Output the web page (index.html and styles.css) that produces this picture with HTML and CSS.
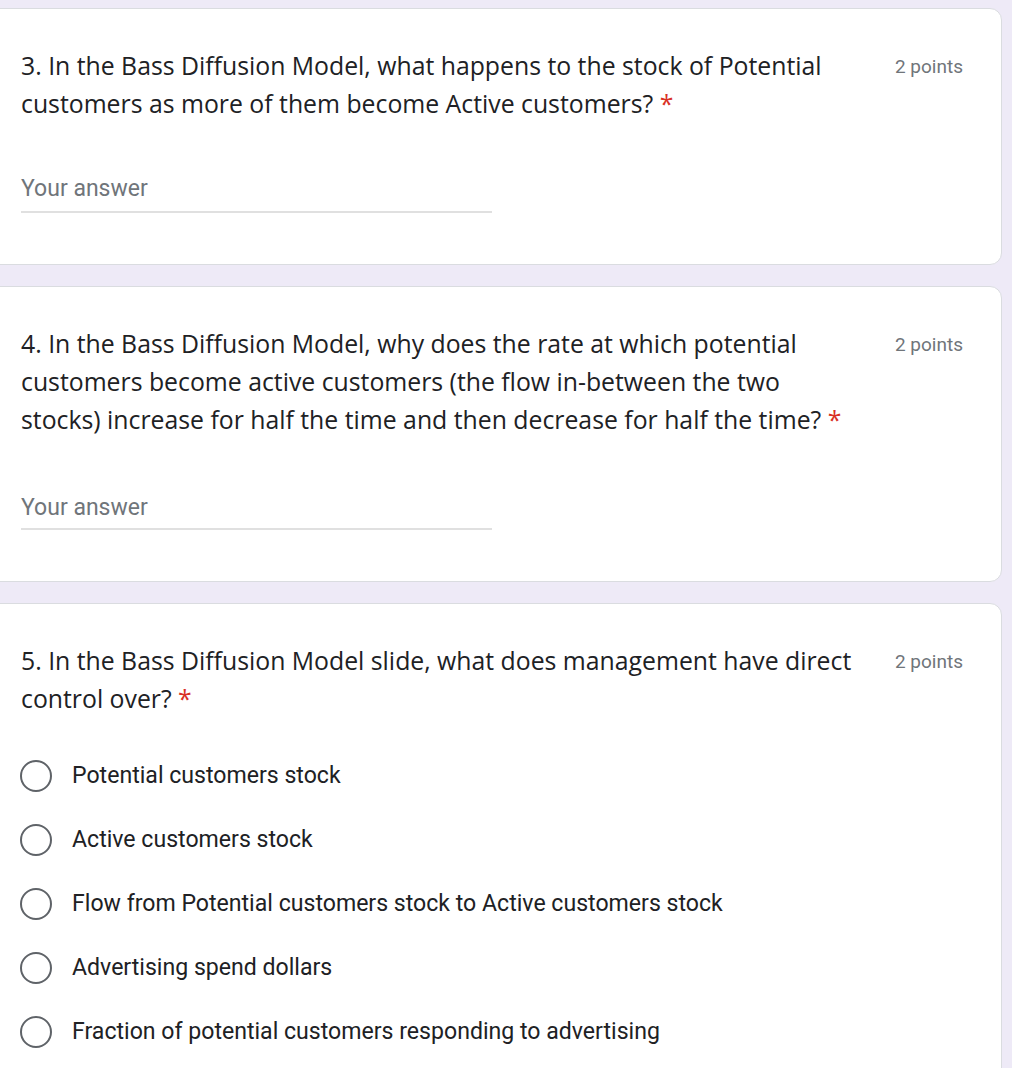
FILE: index.html
```html
<!DOCTYPE html>
<html lang="en">
<head>
<meta charset="utf-8">
<title>Quiz</title>
<link rel="stylesheet" href="styles.css">
</head>
<body>
<div class="page">
  <section class="card">
    <div class="q-head">
      <div class="q-title">3. In the Bass Diffusion Model, what happens to the stock of Potential customers as more of them become Active customers? <span class="req">*</span></div>
      <div class="q-points">2 points</div>
    </div>
    <div class="answer"><span class="answer-text">Your answer</span></div>
  </section>

  <section class="card">
    <div class="q-head">
      <div class="q-title">4. In the Bass Diffusion Model, why does the rate at which potential customers become active customers (the flow in-between the two stocks) increase for half the time and then decrease for half the time? <span class="req">*</span></div>
      <div class="q-points">2 points</div>
    </div>
    <div class="answer answer-low"><span class="answer-text">Your answer</span></div>
  </section>

  <section class="card">
    <div class="q-head">
      <div class="q-title">5. In the Bass Diffusion Model slide, what does management have direct control over? <span class="req">*</span></div>
      <div class="q-points">2 points</div>
    </div>
    <div class="options">
      <label class="option"><span class="radio"></span><span class="opt-text">Potential customers stock</span></label>
      <label class="option"><span class="radio"></span><span class="opt-text">Active customers stock</span></label>
      <label class="option"><span class="radio"></span><span class="opt-text">Flow from Potential customers stock to Active customers stock</span></label>
      <label class="option"><span class="radio"></span><span class="opt-text">Advertising spend dollars</span></label>
      <label class="option"><span class="radio"></span><span class="opt-text">Fraction of potential customers responding to advertising</span></label>
    </div>
  </section>
</div>
</body>
</html>
```

FILE: styles.css
```css
html, body {
  margin: 0;
  padding: 0;
  background: #eeeaf7;
}

body {
  font-family: Roboto, "Liberation Sans", Arial, sans-serif;
  color: #202124;
  overflow: hidden;
}

.page {
  padding-top: 8px;
}

.card {
  box-sizing: border-box;
  width: 1020px;
  margin-left: -18px;
  margin-bottom: 21px;
  background: #ffffff;
  border: 1px solid #dadce0;
  border-radius: 12px;
  padding: 38px;
}

.q-head {
  display: flex;
  align-items: flex-start;
}

.q-title {
  flex: 1 1 auto;
  max-width: 838px;
  font-family: "Open Sans", Roboto, sans-serif;
  font-size: 24.8px;
  line-height: 38px;
  color: #202124;
  margin-top: -1px;
  margin-bottom: 1px;
}

.req {
  color: #d93025;
}

.q-points {
  margin-left: auto;
  padding-left: 24px;
  padding-top: 1px;
  flex: 0 0 auto;
  font-size: 19px;
  line-height: 38px;
  color: #70757a;
  white-space: nowrap;
}

.answer {
  width: 471px;
  margin-top: 50px;
  margin-bottom: 13px;
  padding-bottom: 6px;
  border-bottom: 2px solid #e0e0e0;
}

.answer-low {
  margin-top: 53px;
  padding-bottom: 4px;
}

.answer-text {
  display: block;
  font-size: 23px;
  line-height: 32px;
  color: #70757a;
}

.options {
  margin-top: 26px;
  display: flex;
  flex-direction: column;
}

.option {
  display: flex;
  align-items: center;
  height: 64px;
  margin-left: -1px;
}

.radio {
  box-sizing: border-box;
  width: 32px;
  height: 32px;
  border: 2.5px solid #5f6368;
  border-radius: 50%;
  flex: 0 0 auto;
}

.opt-text {
  margin-left: 20px;
  font-size: 23.1px;
  line-height: 32px;
  color: #202124;
}
```
